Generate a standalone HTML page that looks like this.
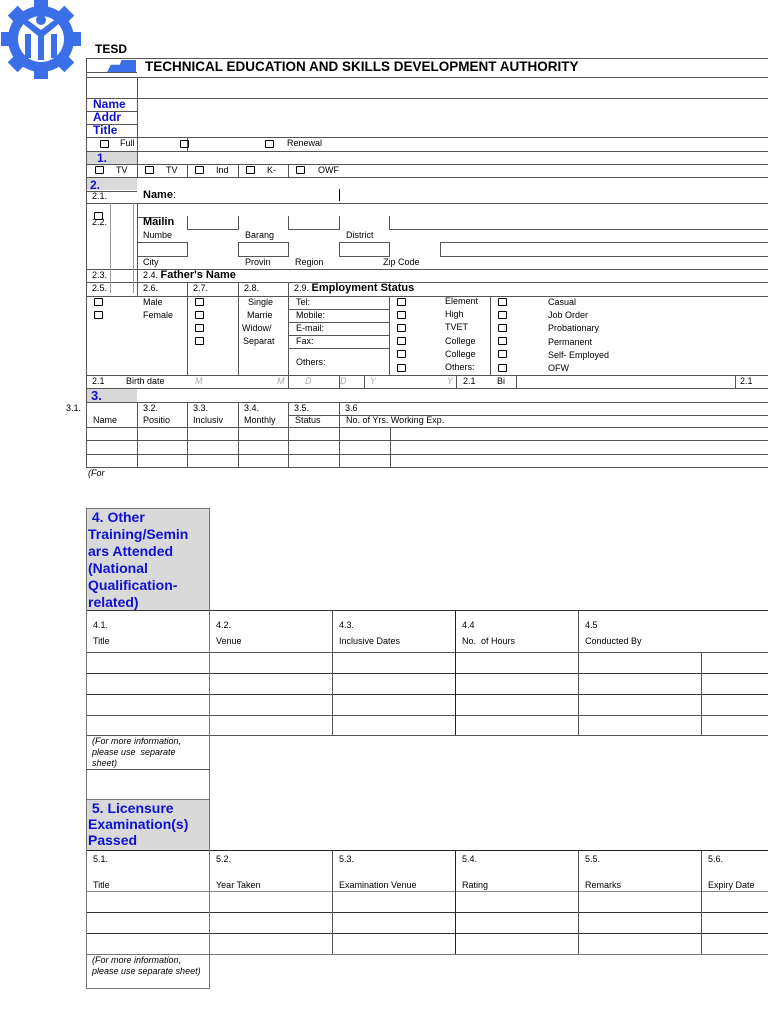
<!DOCTYPE html>
<html><head><meta charset="utf-8"><style>
body{margin:0;width:768px;height:1024px;position:relative;background:#fff;font-family:"Liberation Sans",sans-serif;color:#000;overflow:hidden}
div,span{position:absolute}
.h{height:1px;background:#555}
.v{width:1px;background:#555}
.t{font-size:9px;white-space:nowrap;line-height:11px}
.b{font-weight:bold;font-size:11px}
.bl{color:#1010d0;font-weight:bold}
.g{background:#d9d9d9}
.cb{width:7px;height:6px;border:1px solid #000;border-radius:1px}
.gi{color:#aaa;font-style:italic}
.i{font-style:italic;font-size:9px;line-height:11px}
.sec{border:1px solid #777;box-sizing:border-box}
</style></head><body>

<svg style="position:absolute;left:0;top:0" width="84" height="80" viewBox="0 0 84 80">
<g fill="#3a6fe8" transform="translate(41,39)">
<circle r="33"/>
<rect x="-7" y="-40" width="14" height="14" transform="rotate(0)"/>
<rect x="-7" y="-40" width="14" height="14" transform="rotate(45)"/>
<rect x="-7" y="-40" width="14" height="14" transform="rotate(90)"/>
<rect x="-7" y="-40" width="14" height="14" transform="rotate(135)"/>
<rect x="-7" y="-40" width="14" height="14" transform="rotate(180)"/>
<rect x="-7" y="-40" width="14" height="14" transform="rotate(225)"/>
<rect x="-7" y="-40" width="14" height="14" transform="rotate(270)"/>
<rect x="-7" y="-40" width="14" height="14" transform="rotate(315)"/>
</g>
<circle cx="41" cy="39" r="23" fill="#fff"/>
<g fill="#3a6fe8">
<circle cx="41" cy="20" r="5"/>
<path d="M21 22l4-4 16 12 16-12 4 4-17 14v24h-6V36z"/>
<path d="M25 34h6v24h-6zM51 34h6v24h-6z"/>
</g>
</svg>

<span class="t" style="left:95px;top:44px;font-size:12px;font-weight:bold">TESD</span>
<div style="left:100px;top:60px;width:36px;height:12px;background:#3a6fe8;clip-path:polygon(30% 40%,55% 40%,60% 0,100% 0,100% 100%,20% 100%)"></div>
<span class="t" style="left:145px;top:59px;font-size:13.5px;font-weight:bold;line-height:16px">TECHNICAL EDUCATION AND SKILLS DEVELOPMENT AUTHORITY</span>

<div class="h" style="left:86px;top:58px;width:682px"></div>
<div class="h" style="left:86px;top:72px;width:51px"></div>
<div class="h" style="left:86px;top:77px;width:682px"></div>
<div class="h" style="left:86px;top:98px;width:682px"></div>
<div class="h" style="left:86px;top:111px;width:51px"></div>
<div class="h" style="left:86px;top:124px;width:51px"></div>
<div class="h" style="left:86px;top:137px;width:682px"></div>
<div class="h" style="left:86px;top:151px;width:682px"></div>
<div class="h" style="left:86px;top:164px;width:682px"></div>
<div class="h" style="left:86px;top:177px;width:682px"></div>
<div class="h" style="left:86px;top:191px;width:51px"></div>
<div class="h" style="left:86px;top:203px;width:682px"></div>
<div class="h" style="left:137px;top:217px;width:22px"></div>
<div class="h" style="left:86px;top:269px;width:682px"></div>
<div class="h" style="left:86px;top:282px;width:682px"></div>
<div class="h" style="left:86px;top:296px;width:682px"></div>
<div class="h" style="left:86px;top:375px;width:682px"></div>
<div class="h" style="left:86px;top:388px;width:682px"></div>
<div class="h" style="left:86px;top:402px;width:682px"></div>
<div class="h" style="left:288px;top:415px;width:480px"></div>
<div class="h" style="left:86px;top:427px;width:682px"></div>
<div class="h" style="left:86px;top:440px;width:682px"></div>
<div class="h" style="left:86px;top:454px;width:682px"></div>
<div class="h" style="left:86px;top:467px;width:682px"></div>
<div class="h" style="left:288px;top:309px;width:101px"></div>
<div class="h" style="left:288px;top:322px;width:101px"></div>
<div class="h" style="left:288px;top:335px;width:101px"></div>
<div class="h" style="left:288px;top:348px;width:101px"></div>

<div class="v" style="left:86px;top:58px;height:409px"></div>
<div class="v" style="left:137px;top:77px;height:100px"></div>
<div class="v" style="left:187px;top:137px;height:14px"></div>
<div class="v" style="left:137px;top:164px;height:13px"></div>
<div class="v" style="left:187px;top:164px;height:13px"></div>
<div class="v" style="left:238px;top:164px;height:13px"></div>
<div class="v" style="left:288px;top:164px;height:13px"></div>
<div class="v" style="left:339px;top:189px;height:12px;background:#000"></div>
<div class="v" style="left:110px;top:203px;height:90px;background:#999"></div>
<div class="v" style="left:133px;top:203px;height:90px;background:#999"></div>
<div class="v" style="left:137px;top:203px;height:93px"></div>
<div class="v" style="left:187px;top:282px;height:93px"></div>
<div class="v" style="left:238px;top:282px;height:93px"></div>
<div class="v" style="left:288px;top:282px;height:106px"></div>
<div class="v" style="left:389px;top:296px;height:79px"></div>
<div class="v" style="left:490px;top:296px;height:79px"></div>
<div class="v" style="left:339px;top:375px;height:13px"></div>
<div class="v" style="left:364px;top:375px;height:13px"></div>
<div class="v" style="left:456px;top:375px;height:13px"></div>
<div class="v" style="left:516px;top:375px;height:13px"></div>
<div class="v" style="left:735px;top:375px;height:13px"></div>
<div class="v" style="left:137px;top:402px;height:65px"></div>
<div class="v" style="left:187px;top:402px;height:65px"></div>
<div class="v" style="left:238px;top:402px;height:65px"></div>
<div class="v" style="left:288px;top:402px;height:65px"></div>
<div class="v" style="left:339px;top:402px;height:65px"></div>
<div class="v" style="left:390px;top:427px;height:40px"></div>

<div style="left:187px;top:216px;width:50px;height:13px;border:1px solid #555;border-top:0"></div>
<div style="left:288px;top:216px;width:50px;height:13px;border:1px solid #555;border-top:0"></div>
<div style="left:389px;top:216px;width:379px;height:13px;border:1px solid #555;border-right:0;border-top:0"></div>
<div style="left:137px;top:242px;width:49px;height:13px;border:1px solid #555"></div>
<div style="left:238px;top:242px;width:49px;height:13px;border:1px solid #555"></div>
<div style="left:339px;top:242px;width:49px;height:13px;border:1px solid #555"></div>
<div style="left:440px;top:242px;width:328px;height:13px;border:1px solid #555;border-right:0"></div>

<div class="g" style="left:87px;top:152px;width:50px;height:12px"></div>
<div class="g" style="left:87px;top:178px;width:50px;height:12px"></div>
<div class="g" style="left:87px;top:389px;width:50px;height:13px"></div>

<span class="t bl" style="left:93px;top:98px;font-size:12px;line-height:13px">Name</span>
<span class="t bl" style="left:93px;top:111px;font-size:12px;line-height:13px">Addr</span>
<span class="t bl" style="left:93px;top:124px;font-size:12px;line-height:13px">Title</span>

<div class="cb" style="left:100px;top:140px"></div><span class="t" style="left:120px;top:138px">Full</span>
<div class="cb" style="left:180px;top:140px"></div>
<div class="cb" style="left:265px;top:140px"></div><span class="t" style="left:287px;top:138px">Renewal</span>
<span class="t bl" style="left:97px;top:151px;font-size:12px;line-height:14px">1.</span>

<div class="cb" style="left:95px;top:166px"></div><span class="t" style="left:116px;top:165px">TV</span>
<div class="cb" style="left:145px;top:166px"></div><span class="t" style="left:166px;top:165px">TV</span>
<div class="cb" style="left:195px;top:166px"></div><span class="t" style="left:216px;top:165px">Ind</span>
<div class="cb" style="left:246px;top:166px"></div><span class="t" style="left:267px;top:165px">K-</span>
<div class="cb" style="left:296px;top:166px"></div><span class="t" style="left:318px;top:165px">OWF</span>
<span class="t bl" style="left:90px;top:178px;font-size:12px;line-height:14px">2.</span>

<span class="t" style="left:92px;top:191px">2.1.</span>
<span class="t b" style="left:143px;top:190px">Name<span style="position:static;font-weight:normal">:</span></span>
<div class="cb" style="left:94px;top:212px"></div>
<span class="t" style="left:92px;top:217px">2.2.</span>
<span class="t b" style="left:143px;top:217px">Mailin</span>
<span class="t" style="left:143px;top:230px">Numbe</span>
<span class="t" style="left:245px;top:230px">Barang</span>
<span class="t" style="left:346px;top:230px">District</span>
<span class="t" style="left:143px;top:257px">City</span>
<span class="t" style="left:245px;top:257px">Provin</span>
<span class="t" style="left:295px;top:257px">Region</span>
<span class="t" style="left:383px;top:257px">Zip Code</span>

<span class="t" style="left:92px;top:270px">2.3.</span>
<span class="t" style="left:143px;top:270px">2.4. <b style="font-size:11px">Father's Name</b></span>
<span class="t" style="left:92px;top:283px">2.5.</span>
<span class="t" style="left:143px;top:283px">2.6.</span>
<span class="t" style="left:193px;top:283px">2.7.</span>
<span class="t" style="left:244px;top:283px">2.8.</span>
<span class="t" style="left:294px;top:283px">2.9. <b style="font-size:11px">Employment Status</b></span>

<div class="cb" style="left:94px;top:298px"></div><span class="t" style="left:143px;top:297px">Male</span>
<div class="cb" style="left:94px;top:311px"></div><span class="t" style="left:143px;top:310px">Female</span>
<div class="cb" style="left:195px;top:298px"></div><span class="t" style="left:248px;top:297px">Single</span>
<div class="cb" style="left:195px;top:311px"></div><span class="t" style="left:247px;top:310px">Marrie</span>
<div class="cb" style="left:195px;top:324px"></div><span class="t" style="left:242px;top:323px">Widow/</span>
<div class="cb" style="left:195px;top:337px"></div><span class="t" style="left:243px;top:336px">Separat</span>
<span class="t" style="left:296px;top:297px">Tel:</span>
<span class="t" style="left:296px;top:310px">Mobile:</span>
<span class="t" style="left:296px;top:323px">E-mail:</span>
<span class="t" style="left:296px;top:336px">Fax:</span>
<span class="t" style="left:296px;top:357px">Others:</span>
<div class="cb" style="left:397px;top:298px"></div><span class="t" style="left:445px;top:296px">Element</span>
<div class="cb" style="left:397px;top:311px"></div><span class="t" style="left:445px;top:309px">High</span>
<div class="cb" style="left:397px;top:324px"></div><span class="t" style="left:445px;top:322px">TVET</span>
<div class="cb" style="left:397px;top:337px"></div><span class="t" style="left:445px;top:336px">College</span>
<div class="cb" style="left:397px;top:350px"></div><span class="t" style="left:445px;top:349px">College</span>
<div class="cb" style="left:397px;top:364px"></div><span class="t" style="left:445px;top:362px">Others:</span>
<div class="cb" style="left:498px;top:298px"></div><span class="t" style="left:548px;top:297px">Casual</span>
<div class="cb" style="left:498px;top:311px"></div><span class="t" style="left:548px;top:310px">Job Order</span>
<div class="cb" style="left:498px;top:324px"></div><span class="t" style="left:548px;top:323px">Probationary</span>
<div class="cb" style="left:498px;top:337px"></div><span class="t" style="left:548px;top:337px">Permanent</span>
<div class="cb" style="left:498px;top:350px"></div><span class="t" style="left:548px;top:350px">Self- Employed</span>
<div class="cb" style="left:498px;top:364px"></div><span class="t" style="left:548px;top:363px">OFW</span>

<span class="t" style="left:92px;top:376px">2.1</span>
<span class="t" style="left:126px;top:376px">Birth date</span>
<span class="t gi" style="left:195px;top:376px">M</span>
<span class="t gi" style="left:277px;top:376px">M</span>
<span class="t gi" style="left:305px;top:376px">D</span>
<span class="t gi" style="left:340px;top:376px">D</span>
<span class="t gi" style="left:370px;top:376px">Y</span>
<span class="t gi" style="left:447px;top:376px">Y</span>
<span class="t" style="left:463px;top:376px">2.1</span>
<span class="t" style="left:497px;top:376px">Bi</span>
<span class="t" style="left:740px;top:376px">2.1</span>

<span class="t bl" style="left:91px;top:388px;font-size:13px;line-height:15px">3.</span>
<span class="t" style="left:66px;top:403px">3.1.</span>
<span class="t" style="left:143px;top:403px">3.2.</span>
<span class="t" style="left:193px;top:403px">3.3.</span>
<span class="t" style="left:244px;top:403px">3.4.</span>
<span class="t" style="left:294px;top:403px">3.5.</span>
<span class="t" style="left:345px;top:403px">3.6</span>
<span class="t" style="left:93px;top:415px">Name</span>
<span class="t" style="left:143px;top:415px">Positio</span>
<span class="t" style="left:193px;top:415px">Inclusiv</span>
<span class="t" style="left:244px;top:415px">Monthly</span>
<span class="t" style="left:295px;top:415px">Status</span>
<span class="t" style="left:346px;top:415px">No. of Yrs. Working Exp.</span>
<span class="i t" style="left:88px;top:468px">(For</span>

<div class="g sec" style="left:86px;top:508px;width:124px;height:103px"></div>
<div class="bl" style="left:88px;top:509px;width:122px;font-size:14px;line-height:17px">&nbsp;4. Other Training/Semin ars Attended (National Qualification-related)</div>
<div class="h" style="left:86px;top:610px;width:682px;background:#333"></div>
<div class="h" style="left:86px;top:652px;width:682px"></div>
<div class="h" style="left:86px;top:673px;width:682px;background:#333"></div>
<div class="h" style="left:86px;top:694px;width:682px;background:#333"></div>
<div class="h" style="left:86px;top:715px;width:682px"></div>
<div class="h" style="left:86px;top:735px;width:682px"></div>
<div class="v" style="left:86px;top:610px;height:190px;background:#777"></div>
<div class="v" style="left:209px;top:610px;height:190px;background:#777"></div>
<div class="v" style="left:332px;top:610px;height:125px"></div>
<div class="v" style="left:455px;top:610px;height:125px;background:#222"></div>
<div class="v" style="left:578px;top:610px;height:125px"></div>
<div class="v" style="left:701px;top:652px;height:83px"></div>
<div class="h" style="left:86px;top:769px;width:124px"></div>
<div class="h" style="left:86px;top:799px;width:124px"></div>
<span class="t" style="left:93px;top:620px">4.1.</span><span class="t" style="left:93px;top:636px">Title</span>
<span class="t" style="left:216px;top:620px">4.2.</span><span class="t" style="left:216px;top:636px">Venue</span>
<span class="t" style="left:339px;top:620px">4.3.</span><span class="t" style="left:339px;top:636px">Inclusive Dates</span>
<span class="t" style="left:462px;top:620px">4.4</span><span class="t" style="left:462px;top:636px">No.&nbsp; of Hours</span>
<span class="t" style="left:585px;top:620px">4.5</span><span class="t" style="left:585px;top:636px">Conducted By</span>
<div class="i" style="left:92px;top:736px;width:108px">(For more information, please use&nbsp; separate sheet)</div>

<div class="g sec" style="left:86px;top:799px;width:124px;height:52px"></div>
<div class="bl" style="left:88px;top:800px;width:122px;font-size:14px;line-height:16px">&nbsp;5. Licensure Examination(s) Passed</div>
<div class="h" style="left:86px;top:850px;width:682px;background:#222"></div>
<div class="h" style="left:86px;top:891px;width:682px;background:#888"></div>
<div class="h" style="left:86px;top:912px;width:682px;background:#333"></div>
<div class="h" style="left:86px;top:933px;width:682px;background:#333"></div>
<div class="h" style="left:86px;top:954px;width:682px;background:#777"></div>
<div class="v" style="left:86px;top:850px;height:139px;background:#777"></div>
<div class="v" style="left:209px;top:850px;height:139px;background:#777"></div>
<div class="v" style="left:332px;top:850px;height:104px"></div>
<div class="v" style="left:455px;top:850px;height:104px;background:#222"></div>
<div class="v" style="left:578px;top:850px;height:104px"></div>
<div class="v" style="left:701px;top:850px;height:104px"></div>
<div class="h" style="left:86px;top:988px;width:124px;background:#777"></div>
<span class="t" style="left:93px;top:854px">5.1.</span><span class="t" style="left:93px;top:880px">Title</span>
<span class="t" style="left:216px;top:854px">5.2.</span><span class="t" style="left:216px;top:880px">Year Taken</span>
<span class="t" style="left:339px;top:854px">5.3.</span><span class="t" style="left:339px;top:880px">Examination Venue</span>
<span class="t" style="left:462px;top:854px">5.4.</span><span class="t" style="left:462px;top:880px">Rating</span>
<span class="t" style="left:585px;top:854px">5.5.</span><span class="t" style="left:585px;top:880px">Remarks</span>
<span class="t" style="left:708px;top:854px">5.6.</span><span class="t" style="left:708px;top:880px">Expiry Date</span>
<div class="i" style="left:92px;top:955px;width:115px">(For more information, please use separate sheet)</div>
</body></html>
